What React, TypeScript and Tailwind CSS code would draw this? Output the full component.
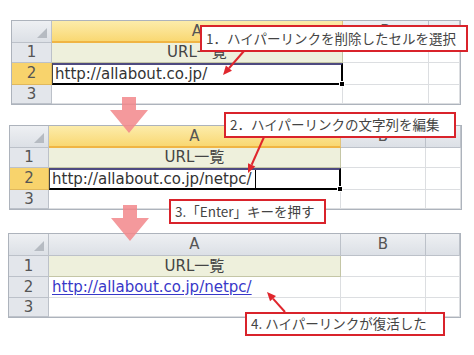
import type { ReactNode } from "react";

const cellFont = "font-['DejaVu_Sans','Noto_Sans_CJK_JP',sans-serif]";
const noteFont = "font-['Noto_Sans_CJK_JP','DejaVu_Sans',sans-serif]";

const head =
  "flex items-center justify-center border-r border-b border-[#bcc1c9] bg-linear-to-b from-[#eef0f3] to-[#dce0e6] text-[15px] text-[#555]";
const headOn =
  "flex items-center justify-center border-r border-r-[#e2c37c] border-b-2 border-b-[#f0b544] bg-linear-to-b from-[#fcecaa] to-[#f9d872] text-[15px] text-[#555]";
const rowHead =
  "flex items-center justify-center border-r border-b border-[#bcc1c9] bg-[#e3e6eb] text-[15px] text-[#555]";
const rowHeadOn =
  "flex items-center justify-center border-r border-b border-[#e0b85c] bg-[#f8d36c] text-[15px] text-[#555]";
const grid = "border-r border-b border-[#dcdee1] bg-white";

function Sheet({
  className,
  active,
  a2,
}: {
  className: string;
  active?: boolean;
  a2: ReactNode;
}) {
  return (
    <div className={`grid border border-[#adb3bc] ${cellFont} ${className}`}>
      {/* header row */}
      <div className={`${head} relative`}>
        <div className="absolute right-[4px] bottom-[4px] h-[10px] w-[10px] bg-[#b6bbc2] [clip-path:polygon(100%_0,100%_100%,0_100%)]" />
      </div>
      <div className={active ? headOn : head}>A</div>
      <div className={head}>B</div>
      <div className={head} />

      {/* row 1 */}
      <div className={rowHead}>1</div>
      <div className="flex items-center justify-center border-r border-b border-[#c4c6a6] bg-[#eef0dc] text-[15px] text-[#444]">
        URL一覧
      </div>
      <div className={grid} />
      <div className={grid} />

      {/* row 2 */}
      <div className={active ? rowHeadOn : rowHead}>2</div>
      {a2}
      <div className={grid} />
      <div className={grid} />

      {/* row 3 */}
      <div className={rowHead}>3</div>
      <div className={grid} />
      <div className={grid} />
      <div className={grid} />
    </div>
  );
}

function FillHandle() {
  return (
    <div className="absolute -right-[4px] -bottom-[4px] h-[6px] w-[6px] border border-white bg-black" />
  );
}

function Note({ className, children }: { className: string; children: ReactNode }) {
  return (
    <div
      className={`absolute flex items-center border-2 border-[#d9232b] bg-white pl-[4px] text-[13.5px] leading-none whitespace-nowrap text-[#444] ${noteFont} ${className}`}
    >
      {children}
    </div>
  );
}

function Pointer({ x1, y1, x2, y2 }: { x1: number; y1: number; x2: number; y2: number }) {
  const dx = x2 - x1;
  const dy = y2 - y1;
  const len = Math.hypot(dx, dy);
  const ux = dx / len;
  const uy = dy / len;
  const bx = x2 - ux * 9;
  const by = y2 - uy * 9;
  const px = -uy * 4;
  const py = ux * 4;
  return (
    <g>
      <line x1={x1} y1={y1} x2={bx} y2={by} stroke="#e0262d" strokeWidth={2} />
      <polygon
        points={`${x2},${y2} ${bx + px},${by + py} ${bx - px},${by - py}`}
        fill="#e0262d"
      />
    </g>
  );
}

function DownArrow({ cx, top, neck, tip }: { cx: number; top: number; neck: number; tip: number }) {
  return (
    <polygon
      points={`${cx - 7},${top} ${cx + 7},${top} ${cx + 7},${neck} ${cx + 19},${neck} ${cx},${tip} ${cx - 19},${neck} ${cx - 7},${neck}`}
      fill="#f2878b"
      fillOpacity={0.85}
    />
  );
}

export default function App() {
  return (
    <div className="relative h-[355px] w-[474px] overflow-hidden bg-white">
      <div className="flex flex-col">
        <Sheet
          className="mt-[20px] ml-[11px] w-[450px] grid-cols-[40px_291px_86px_31px] grid-rows-[22px_20px_22px_19px]"
          active
          a2={
            <div className="relative flex items-center border-t-2 border-t-[#4e4a80] border-r-2 border-r-black border-b-2 border-b-black border-l border-l-[#444] bg-white pl-[2px] text-[15px] text-[#333]">
              http://allabout.co.jp/
              <FillHandle />
            </div>
          }
        />
        <Sheet
          className="mt-[20px] ml-[9px] w-[453px] grid-cols-[39px_292px_85px_35px] grid-rows-[22px_20px_22px_19px]"
          active
          a2={
            <div className="relative flex items-center border-t-2 border-t-[#4e4a80] border-r-2 border-r-black border-b-2 border-b-black border-l border-l-[#444] bg-white pl-[2px] text-[15px] text-[#333]">
              http://allabout.co.jp/netpc/
              <span className="ml-[3px] inline-block h-[19px] w-px bg-black" />
              <FillHandle />
            </div>
          }
        />
        <Sheet
          className="mt-[23px] ml-[8px] w-[453px] grid-cols-[40px_292px_85px_34px] grid-rows-[22px_21px_21px_19px]"
          a2={
            <div className="flex items-center border-r border-b border-[#dcdee1] bg-white pl-[3px] text-[15px] text-[#3838c8] underline underline-offset-2">
              http://allabout.co.jp/netpc/
            </div>
          }
        />
      </div>

      <svg className="pointer-events-none absolute inset-0" width={474} height={355}>
        <DownArrow cx={129} top={97} neck={110} tip={133} />
        <DownArrow cx={130} top={205} neck={218} tip={241} />
        <Pointer x1={244} y1={51} x2={223} y2={75} />
        <Pointer x1={264} y1={137} x2={248} y2={173} />
        <Pointer x1={285} y1={312} x2={267} y2={292} />
      </svg>

      <Note className="top-[25px] left-[200px] h-[27px] w-[268px]">1．ハイパーリンクを削除したセルを選択</Note>
      <Note className="top-[112px] left-[224px] h-[26px] w-[232px]">2．ハイパーリンクの文字列を編集</Note>
      <Note className="top-[199px] left-[169px] h-[25px] w-[157px]">3.「Enter」キーを押す</Note>
      <Note className="top-[312px] left-[245px] h-[24px] w-[200px]">4. ハイパーリンクが復活した</Note>
    </div>
  );
}
